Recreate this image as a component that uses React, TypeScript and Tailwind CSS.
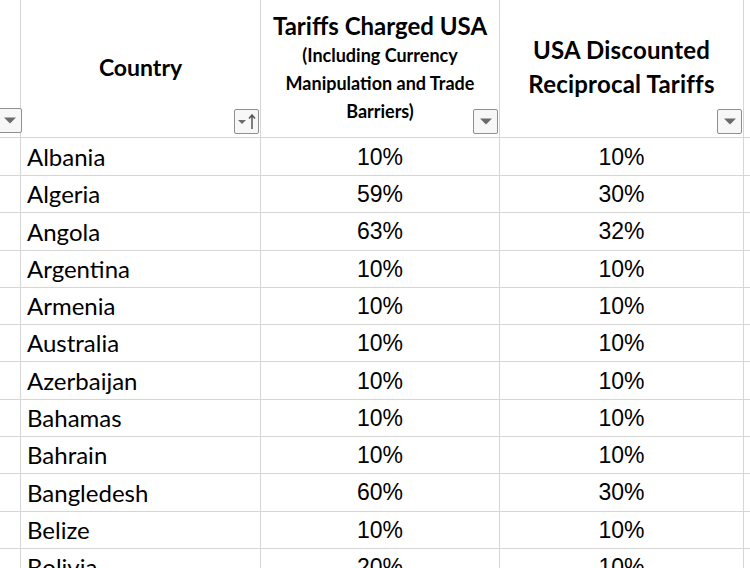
import React from "react";

interface Row {
  country: string;
  charged: string;
  reciprocal: string;
}

const rows: Row[] = [
  { country: "Albania", charged: "10%", reciprocal: "10%" },
  { country: "Algeria", charged: "59%", reciprocal: "30%" },
  { country: "Angola", charged: "63%", reciprocal: "32%" },
  { country: "Argentina", charged: "10%", reciprocal: "10%" },
  { country: "Armenia", charged: "10%", reciprocal: "10%" },
  { country: "Australia", charged: "10%", reciprocal: "10%" },
  { country: "Azerbaijan", charged: "10%", reciprocal: "10%" },
  { country: "Bahamas", charged: "10%", reciprocal: "10%" },
  { country: "Bahrain", charged: "10%", reciprocal: "10%" },
  { country: "Bangledesh", charged: "60%", reciprocal: "30%" },
  { country: "Belize", charged: "10%", reciprocal: "10%" },
  { country: "Bolivia", charged: "20%", reciprocal: "10%" },
];

const cols = "grid grid-cols-[21px_240px_239px_244px_6px]";
const cell = "border-r border-b border-[#d6d6d6]";

function FilterButton({ sorted = false }: { sorted?: boolean }) {
  return (
    <div className="flex h-[25px] w-[25px] items-center justify-center gap-[2px] rounded-[2px] border border-[#8f8f8f] bg-[#f7f7f7]">
      <svg width={sorted ? 8 : 12} height="7" viewBox={sorted ? "0 0 8 7" : "0 0 12 7"}>
        <path d={sorted ? "M0 2h8l-4 4z" : "M0 0.5h12l-6 6z"} fill="#6b6b6b" />
      </svg>
      {sorted && (
        <svg width="8" height="15" viewBox="0 0 8 15">
          <path d="M4 1v14M1 4.5L4 1l3 3.5" stroke="#555" strokeWidth="1.5" fill="none" />
        </svg>
      )}
    </div>
  );
}

export default function App() {
  return (
    <div
      className="h-[568px] w-[750px] overflow-hidden bg-white text-black"
      style={{ fontFamily: "Lato, 'Liberation Sans', sans-serif" }}
    >
      <div className={`${cols} h-[138px]`}>
        <div className={`${cell} flex items-end justify-end pb-[4px]`}>
          <div className="-mr-[2px]">
            <FilterButton />
          </div>
        </div>
        <div className={`${cell} relative flex items-center justify-center pb-[2px]`}>
          <span className="text-[23px] font-bold">Country</span>
          <div className="absolute right-[1px] bottom-[3px]">
            <FilterButton sorted />
          </div>
        </div>
        <div className={`${cell} relative flex flex-col items-center pt-[9px]`}>
          <span className="text-[24px] font-bold leading-[34px]">Tariffs Charged USA</span>
          <span className="-mt-[2px] text-center text-[18px] font-bold leading-[28px]">
            (Including Currency
            <br />
            Manipulation and Trade
            <br />
            Barriers)
          </span>
          <div className="absolute right-[1px] bottom-[3px]">
            <FilterButton />
          </div>
        </div>
        <div className={`${cell} relative flex flex-col items-center pt-[33px]`}>
          <span className="text-center text-[24px] font-bold leading-[34px] tracking-[0.2px]">
            USA Discounted
            <br />
            Reciprocal Tariffs
          </span>
          <div className="absolute right-[1px] bottom-[3px]">
            <FilterButton />
          </div>
        </div>
        <div className="border-b border-[#d6d6d6]" />
      </div>

      {rows.map((r) => (
        <div key={r.country} className={`${cols} h-[37.3px]`}>
          <div className={cell} />
          <div className={`${cell} flex items-center pl-[6px] pt-[1px] text-[24px]`}>{r.country}</div>
          <div
            className={`${cell} flex items-center justify-center pt-[1px] text-[23px]`}
            style={{ fontFamily: "'Liberation Sans', sans-serif" }}
          >
            {r.charged}
          </div>
          <div
            className={`${cell} flex items-center justify-center pt-[1px] text-[23px]`}
            style={{ fontFamily: "'Liberation Sans', sans-serif" }}
          >
            {r.reciprocal}
          </div>
          <div className="border-b border-[#d6d6d6]" />
        </div>
      ))}
    </div>
  );
}
